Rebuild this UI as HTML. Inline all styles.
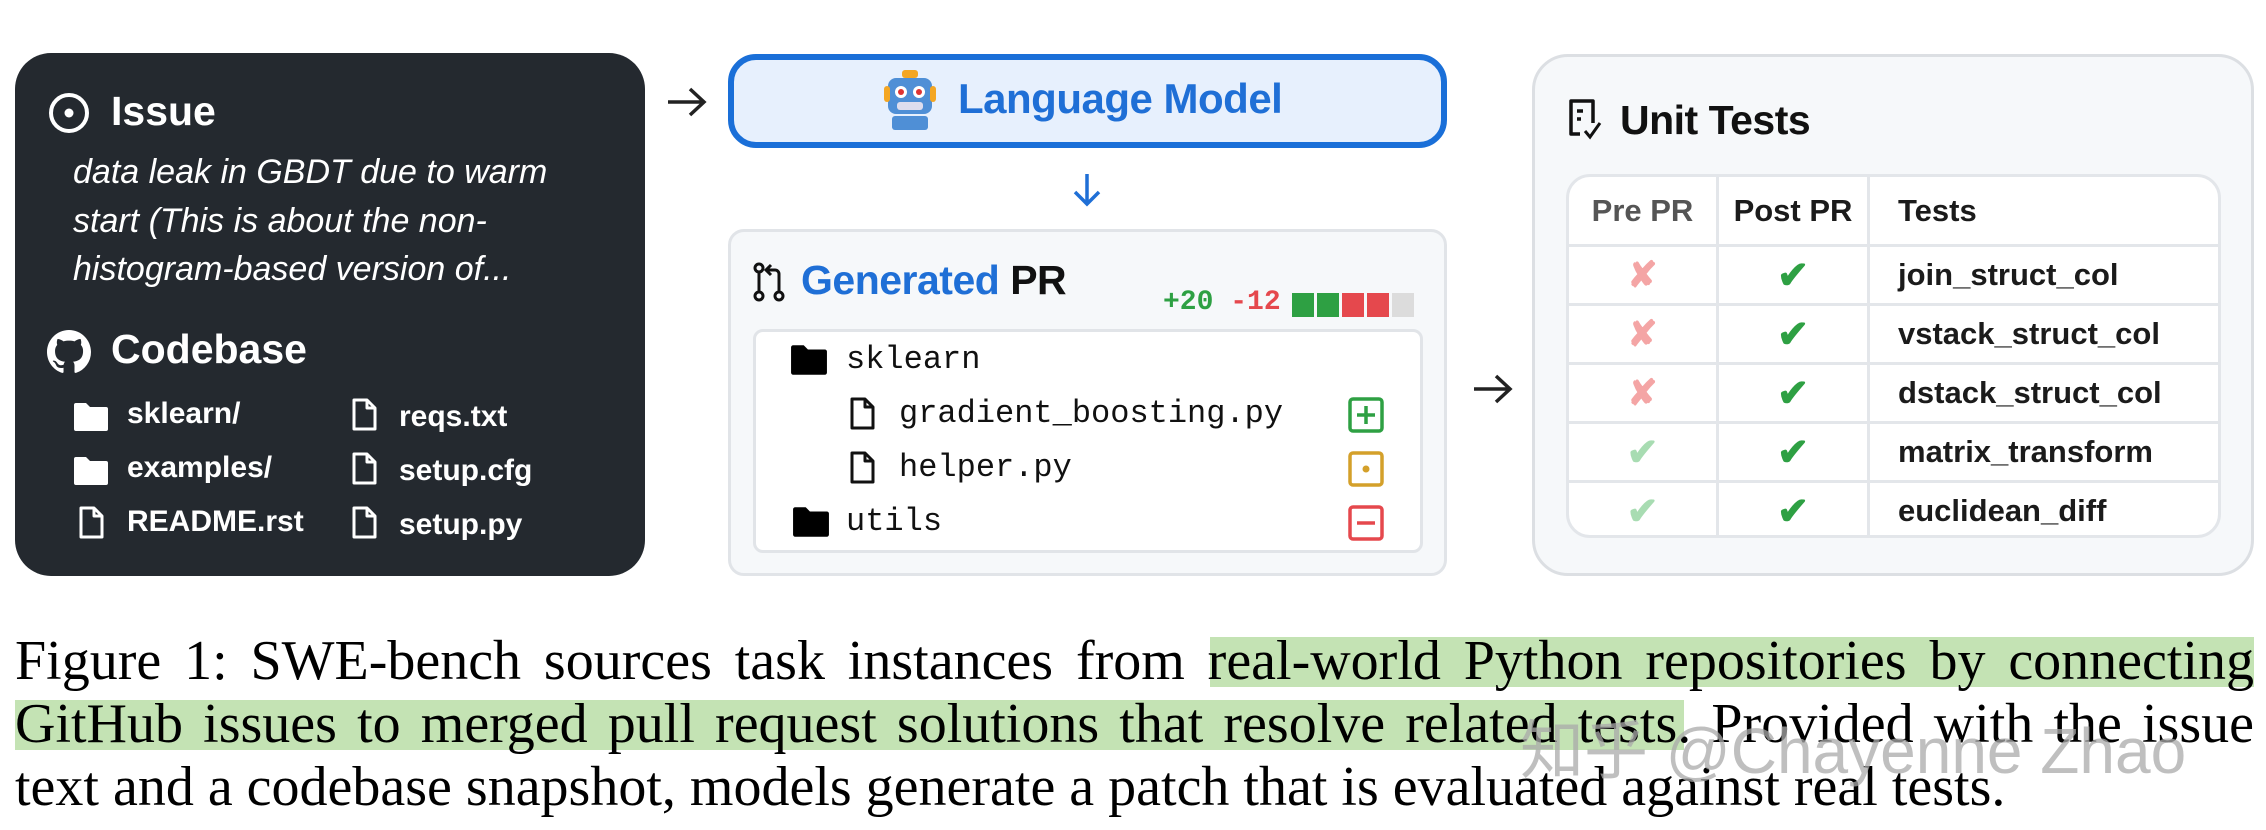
<!DOCTYPE html>
<html><head><meta charset="utf-8"><style>
*{margin:0;padding:0;box-sizing:border-box}
body{width:2266px;height:830px;background:#fff;position:relative;overflow:hidden;font-family:"Liberation Sans",sans-serif}
.a{position:absolute;white-space:nowrap}
.mono{font-family:"Liberation Mono","DejaVu Sans Mono",monospace}
.cap{position:absolute;left:15px;width:2239px;font-family:"Liberation Serif",serif;font-size:56px;text-align:justify;text-align-last:justify;white-space:nowrap;line-height:56px}
.hl{background:#c4e3b4}
td{border:3px solid #e3e6ea;height:59px;font-size:31px;font-weight:bold;color:#1b1b1b}
</style></head><body>

<!-- Dark box -->
<div class="a" style="left:15px;top:53px;width:630px;height:523px;background:#24292f;border-radius:36px"></div>
<svg class="a" style="left:47px;top:91px" width="44" height="44" viewBox="0 0 44 44"><circle cx="22" cy="22" r="18" fill="none" stroke="#fff" stroke-width="4"/><circle cx="22" cy="22" r="4.5" fill="#fff"/></svg>
<div class="a" style="left:111px;top:88px;font-size:41px;font-weight:bold;color:#fff">Issue</div>
<div class="a" style="left:73px;top:148px;font-size:34px;font-style:italic;color:#fff;line-height:48.5px">data leak in GBDT due to warm<br>start (This is about the non-<br>histogram-based version of...</div>
<svg class="a" style="left:47px;top:329px" width="44" height="46" viewBox="0 0 16 16"><path fill="#fff" d="M8 0C3.58 0 0 3.580 0 8c0 3.54 2.29 6.53 5.47 7.59.4.07.55-.17.55-.38 0-.19-.01-.82-.01-1.49-2.01.37-2.530-.49-2.69-.94-.09-.23-.48-.94-.82-1.13-.28-.15-.68-.52-.01-.53.63-.01 1.08.58 1.23.82.72 1.21 1.87.87 2.33.66.07-.52.28-.87.51-1.07-1.780-.2-3.64-.89-3.64-3.95 0-.87.31-1.59.82-2.15-.08-.2-.36-1.02.08-2.12 0 0 .67-.21 2.2.82.64-.18 1.32-.27 2-.27.68 0 1.36.09 2 .27 1.53-1.04 2.2-.82 2.2-.82.44 1.1.16 1.92.08 2.12.51.56.82 1.27.82 2.15 0 3.07-1.87 3.75-3.65 3.95.29.25.54.73.54 1.48 0 1.07-.01 1.93-.01 2.2 0 .21.15.46.55.38A8.013 8.013 0 0016 8c0-4.42-3.58-8-8-8z"/></svg>
<div class="a" style="left:111px;top:326px;font-size:41px;font-weight:bold;color:#fff">Codebase</div>

<svg class="a" style="left:73px;top:402px" width="36" height="30" viewBox="0 0 36 30"><path d="M1 3a2 2 0 012-2h10l4 4h16a2 2 0 012 2v20a2 2 0 01-2 2H3a2 2 0 01-2-2z" fill="#fff"/></svg>
<div class="a" style="left:127px;top:397px;font-size:30px;font-weight:bold;color:#fff">sklearn/</div>
<svg class="a" style="left:73px;top:456px" width="36" height="30" viewBox="0 0 36 30"><path d="M1 3a2 2 0 012-2h10l4 4h16a2 2 0 012 2v20a2 2 0 01-2 2H3a2 2 0 01-2-2z" fill="#fff"/></svg>
<div class="a" style="left:127px;top:451px;font-size:30px;font-weight:bold;color:#fff">examples/</div>
<svg class="a" style="left:78px;top:506px" width="26" height="34" viewBox="0 0 26 34"><path d="M3 2h13l8 8v21H3z M16 2v8h8" fill="none" stroke="#fff" stroke-width="3" stroke-linejoin="round"/></svg>
<div class="a" style="left:127px;top:505px;font-size:30px;font-weight:bold;color:#fff">README.rst</div>
<svg class="a" style="left:351px;top:398px" width="26" height="34" viewBox="0 0 26 34"><path d="M3 2h13l8 8v21H3z M16 2v8h8" fill="none" stroke="#fff" stroke-width="3" stroke-linejoin="round"/></svg>
<div class="a" style="left:399px;top:400px;font-size:30px;font-weight:bold;color:#fff">reqs.txt</div>
<svg class="a" style="left:351px;top:452px" width="26" height="34" viewBox="0 0 26 34"><path d="M3 2h13l8 8v21H3z M16 2v8h8" fill="none" stroke="#fff" stroke-width="3" stroke-linejoin="round"/></svg>
<div class="a" style="left:399px;top:454px;font-size:30px;font-weight:bold;color:#fff">setup.cfg</div>
<svg class="a" style="left:351px;top:506px" width="26" height="34" viewBox="0 0 26 34"><path d="M3 2h13l8 8v21H3z M16 2v8h8" fill="none" stroke="#fff" stroke-width="3" stroke-linejoin="round"/></svg>
<div class="a" style="left:399px;top:508px;font-size:30px;font-weight:bold;color:#fff">setup.py</div>

<!-- arrows -->
<svg class="a" style="left:666px;top:86px" width="42" height="32" viewBox="0 0 42 32"><path d="M2 16h36M24 3l14 13-14 13" fill="none" stroke="#222" stroke-width="3.5"/></svg>
<svg class="a" style="left:1071px;top:172px" width="32" height="36" viewBox="0 0 32 36"><path d="M16 2v30M4 20l12 12 12-12" fill="none" stroke="#1f6fd6" stroke-width="3.5"/></svg>
<svg class="a" style="left:1472px;top:373px" width="42" height="32" viewBox="0 0 42 32"><path d="M2 16h36M24 3l14 13-14 13" fill="none" stroke="#222" stroke-width="3.5"/></svg>

<!-- LM box -->
<div class="a" style="left:728px;top:54px;width:719px;height:94px;background:#e7f0fd;border:6px solid #1a6fd8;border-radius:28px"></div>
<svg class="a" style="left:884px;top:70px" width="52" height="60" viewBox="0 0 52 60"><rect x="18" y="0" width="16" height="8" rx="3" fill="#f4a623"/><rect x="4" y="8" width="44" height="36" rx="8" fill="#4f8fd6"/><rect x="0" y="16" width="6" height="16" rx="3" fill="#f4a623"/><rect x="46" y="16" width="6" height="16" rx="3" fill="#f4a623"/><circle cx="17" cy="22" r="6" fill="#fff"/><circle cx="35" cy="22" r="6" fill="#fff"/><circle cx="17" cy="22" r="3" fill="#d33"/><circle cx="35" cy="22" r="3" fill="#d33"/><rect x="13" y="32" width="26" height="8" rx="3" fill="#dde"/><rect x="8" y="46" width="36" height="14" rx="3" fill="#4f8fd6"/></svg>
<div class="a" style="left:958px;top:75px;font-size:42px;font-weight:bold;color:#1f6fd6;letter-spacing:-0.5px">Language Model</div>

<!-- PR box -->
<div class="a" style="left:728px;top:229px;width:719px;height:347px;background:#f6f8fa;border:3px solid #e1e4e8;border-radius:16px"></div>
<svg class="a" style="left:752px;top:262px" width="34" height="40" viewBox="0 0 34 40"><circle cx="7" cy="6" r="4" fill="none" stroke="#111" stroke-width="3"/><circle cx="7" cy="34" r="4" fill="none" stroke="#111" stroke-width="3"/><circle cx="27" cy="34" r="4" fill="none" stroke="#111" stroke-width="3"/><path d="M7 10v20M27 30V12a4 4 0 00-4-4h-8M19 3l-5 5 5 5" fill="none" stroke="#111" stroke-width="3"/></svg>
<div class="a" style="left:801px;top:257px;font-size:41px;font-weight:bold;color:#111;letter-spacing:-0.5px"><span style="color:#1f6fd6">Generated</span> PR</div>
<div class="a mono" style="left:1163px;top:287px;font-size:28px;font-weight:bold;color:#2ea043">+20 <span style="color:#e5484d">-12</span></div>
<div class="a" style="left:1292px;top:293px;width:22px;height:24px;background:#2ea043"></div>
<div class="a" style="left:1317px;top:293px;width:22px;height:24px;background:#2ea043"></div>
<div class="a" style="left:1342px;top:293px;width:22px;height:24px;background:#e5484d"></div>
<div class="a" style="left:1367px;top:293px;width:22px;height:24px;background:#e5484d"></div>
<div class="a" style="left:1392px;top:293px;width:22px;height:24px;background:#dcdcdc"></div>

<div class="a" style="left:753px;top:329px;width:670px;height:224px;background:#fff;border:3px solid #e1e4e8;border-radius:10px"></div>
<svg class="a" style="left:790px;top:344px" width="38" height="32" viewBox="0 0 36 30"><path d="M1 3a2 2 0 012-2h10l4 4h16a2 2 0 012 2v20a2 2 0 01-2 2H3a2 2 0 01-2-2z" fill="#000"/></svg>
<div class="a mono" style="left:846px;top:341px;font-size:32px;color:#111">sklearn</div>
<svg class="a" style="left:849px;top:396px" width="26" height="36" viewBox="0 0 26 34"><path d="M3 2h13l8 8v21H3z M16 2v8h8" fill="none" stroke="#111" stroke-width="3" stroke-linejoin="round"/></svg>
<div class="a mono" style="left:899px;top:395px;font-size:32px;color:#111">gradient_boosting.py</div>
<svg class="a" style="left:849px;top:450px" width="26" height="36" viewBox="0 0 26 34"><path d="M3 2h13l8 8v21H3z M16 2v8h8" fill="none" stroke="#111" stroke-width="3" stroke-linejoin="round"/></svg>
<div class="a mono" style="left:899px;top:449px;font-size:32px;color:#111">helper.py</div>
<svg class="a" style="left:792px;top:506px" width="38" height="32" viewBox="0 0 36 30"><path d="M1 3a2 2 0 012-2h10l4 4h16a2 2 0 012 2v20a2 2 0 01-2 2H3a2 2 0 01-2-2z" fill="#000"/></svg>
<div class="a mono" style="left:846px;top:503px;font-size:32px;color:#111">utils</div>
<svg class="a" style="left:1348px;top:397px" width="36" height="36" viewBox="0 0 36 36"><rect x="2" y="2" width="32" height="32" rx="3" fill="none" stroke="#2ea043" stroke-width="3.5"/><path d="M18 9v18M9 18h18" stroke="#2ea043" stroke-width="3.5"/></svg>
<svg class="a" style="left:1348px;top:451px" width="36" height="36" viewBox="0 0 36 36"><rect x="2" y="2" width="32" height="32" rx="3" fill="none" stroke="#d4a02a" stroke-width="3.5"/><circle cx="18" cy="18" r="3.5" fill="#d4a02a"/></svg>
<svg class="a" style="left:1348px;top:505px" width="36" height="36" viewBox="0 0 36 36"><rect x="2" y="2" width="32" height="32" rx="3" fill="none" stroke="#e5484d" stroke-width="3.5"/><path d="M9 18h18" stroke="#e5484d" stroke-width="3.5"/></svg>

<!-- Unit tests -->
<div class="a" style="left:1532px;top:54px;width:722px;height:522px;background:#f6f8fa;border:3px solid #dcdfe3;border-radius:36px"></div>
<svg class="a" style="left:1566px;top:98px" width="38" height="44" viewBox="0 0 38 44"><path d="M14 36H5V3h22v22" fill="none" stroke="#111" stroke-width="3.5" stroke-linejoin="round"/><path d="M11 13h6M11 21h4" stroke="#111" stroke-width="3.5"/><path d="M19 33l5 6 10-14" fill="none" stroke="#111" stroke-width="3"/></svg>
<div class="a" style="left:1620px;top:97px;font-size:41px;font-weight:bold;color:#111;letter-spacing:-0.5px">Unit Tests</div>
<div class="a" style="left:1566px;top:174px;width:655px;height:364px;background:#fff;border:3px solid #e3e6ea;border-radius:24px;overflow:hidden">
<table style="border-collapse:collapse;width:655px;margin:-3px">
<tr style="height:70px"><td style="width:150px;text-align:center;color:#555">Pre PR</td><td style="width:151px;text-align:center">Post PR</td><td style="padding-left:28px">Tests</td></tr>
<tr><td style="text-align:center;color:#f4a5a5;font-size:36px">✘</td><td style="text-align:center;color:#2ea043;font-size:38px">✔</td><td style="padding-left:28px">join_struct_col</td></tr>
<tr><td style="text-align:center;color:#f4a5a5;font-size:36px">✘</td><td style="text-align:center;color:#2ea043;font-size:38px">✔</td><td style="padding-left:28px">vstack_struct_col</td></tr>
<tr><td style="text-align:center;color:#f4a5a5;font-size:36px">✘</td><td style="text-align:center;color:#2ea043;font-size:38px">✔</td><td style="padding-left:28px">dstack_struct_col</td></tr>
<tr><td style="text-align:center;color:#a8dcb2;font-size:38px">✔</td><td style="text-align:center;color:#2ea043;font-size:38px">✔</td><td style="padding-left:28px">matrix_transform</td></tr>
<tr><td style="text-align:center;color:#a8dcb2;font-size:38px">✔</td><td style="text-align:center;color:#2ea043;font-size:38px">✔</td><td style="padding-left:28px">euclidean_diff</td></tr>
</table></div>

<!-- caption -->
<div class="a hl" style="left:1210px;top:637px;width:1044px;height:50px"></div>
<div class="a hl" style="left:15px;top:700px;width:1669px;height:50px"></div>
<div class="cap" style="top:633px">Figure 1: SWE-bench sources task instances from real-world Python repositories by connecting</div>
<div class="cap" style="top:696px">GitHub issues to merged pull request solutions that resolve related tests. Provided with the issue</div>
<div class="cap" style="top:759px;text-align-last:left;width:auto">text and a codebase snapshot, models generate a patch that is evaluated against real tests.</div>
<div class="a" style="left:1520px;top:700px;font-size:64px;color:rgba(170,170,170,0.75);font-family:'Liberation Sans','Noto Sans CJK SC',sans-serif">知乎 @Chayenne Zhao</div>
</body></html>
